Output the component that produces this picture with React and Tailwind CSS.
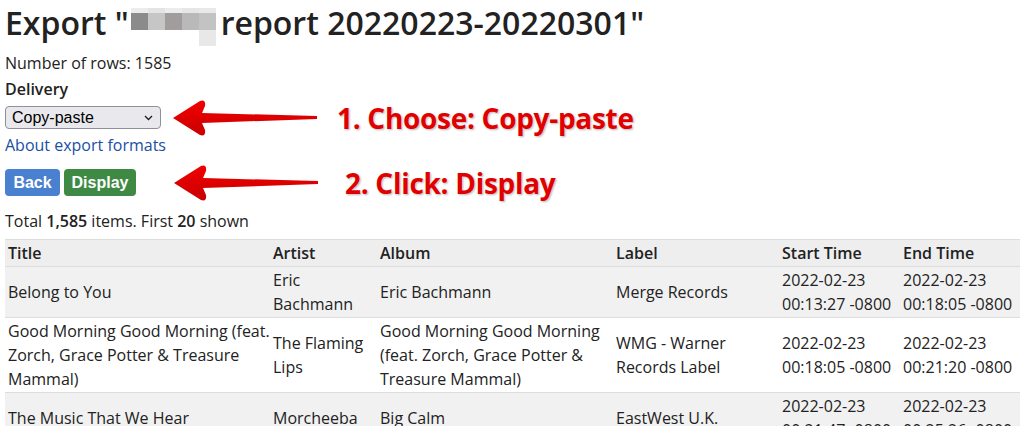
import React from 'react';

const rows = [
  {
    title: 'Belong to You',
    artist: 'Eric Bachmann',
    album: 'Eric Bachmann',
    label: 'Merge Records',
    start: ['2022-02-23', '00:13:27 -0800'],
    end: ['2022-02-23', '00:18:05 -0800'],
  },
  {
    title: 'Good Morning Good Morning (feat. Zorch, Grace Potter & Treasure Mammal)',
    artist: 'The Flaming Lips',
    album: 'Good Morning Good Morning (feat. Zorch, Grace Potter & Treasure Mammal)',
    label: 'WMG - Warner Records Label',
    start: ['2022-02-23', '00:18:05 -0800'],
    end: ['2022-02-23', '00:21:20 -0800'],
  },
  {
    title: 'The Music That We Hear',
    artist: 'Morcheeba',
    album: 'Big Calm',
    label: 'EastWest U.K.',
    start: ['2022-02-23', '00:21:47 -0800'],
    end: ['2022-02-23', '00:25:26 -0800'],
  },
];

// red pointer arrow used on the annotations
const Arrow = () => (
  <svg width="150" height="40" viewBox="0 0 150 40" className="shrink-0">
    <defs>
      <linearGradient id="arrowFill" x1="0" y1="0" x2="0" y2="1">
        <stop offset="0" stopColor="#f20000" />
        <stop offset="1" stopColor="#c80000" />
      </linearGradient>
    </defs>
    <path
      d="M3 20 L30 3 Q36 1 35 8 L32 15 L147 18 L147 21 L32 25 L35 32 Q36 39 30 37 Z"
      fill="url(#arrowFill)"
    />
  </svg>
);

const Note = ({ children }) => (
  <span
    className="text-[28px] leading-[34px] font-bold text-[#e00000] tracking-[-0.3px] whitespace-nowrap"
    style={{ textShadow: '0 0 2px #fff, 1px 1px 2px rgba(0,0,0,0.35)' }}
  >
    {children}
  </span>
);

const Censored = () => (
  <span className="inline-grid grid-cols-5 grid-rows-[5px_17px_16px] w-[85px] mt-[5px] ml-[2px] mr-[5px]">
    <span className="bg-[#ececec]" />
    <span className="bg-[#e4e4e4]" />
    <span className="bg-[#ececec]" />
    <span className="bg-[#e6e6e6]" />
    <span className="bg-[#e9e9e9]" />
    <span className="bg-[#8b8b8b]" />
    <span className="bg-[#c6c6c6]" />
    <span className="bg-[#a29d9d]" />
    <span className="bg-[#b9b9b9]" />
    <span className="bg-[#c3c3c3]" />
    <span />
    <span />
    <span />
    <span />
    <span className="bg-[#e8e8e8]" />
  </span>
);

const App = () => {
  return (
    <div className="w-[1024px] h-[426px] overflow-hidden bg-white px-[5px] text-[#222] font-['Open_Sans',sans-serif]">
      <h1 className="text-[32px] leading-[40px] font-semibold pt-[3px] flex items-start">
        <span>Export "</span>
        <Censored />
        <span>report 20220223-20220301"</span>
      </h1>

      <p className="text-[16px] leading-[20px] mt-[7px]">Number of rows: 1585</p>

      <p className="text-[16px] leading-[20px] font-semibold mt-[6px]">Delivery</p>

      <div className="flex items-center h-[23px] mt-[7px]">
        <div className="w-[156px] h-[23px] shrink-0 rounded-[4px] border border-[#8f8f9d] bg-[#e9e9ed] flex items-center justify-between pl-[6px] pr-[7px] font-['Liberation_Sans',sans-serif] text-[16px] text-black">
          <span>Copy-paste</span>
          <svg width="9" height="6" viewBox="0 0 9 6">
            <path d="M1 1 L4.5 4.5 L8 1" fill="none" stroke="#222" strokeWidth="1.4" />
          </svg>
        </div>
        <div className="ml-[9px] flex items-center">
          <Arrow />
          <span className="ml-[17px]">
            <Note>1. Choose: Copy-paste</Note>
          </span>
        </div>
      </div>

      <a className="block text-[16px] leading-[20px] text-[#1a4fa3] mt-[6px]">About export formats</a>

      <div className="flex items-center h-[27px] mt-[14px]">
        <button className="h-[27px] w-[55px] shrink-0 rounded-[4px] bg-[#4a80d0] text-white font-bold text-[16px] font-['Liberation_Sans',sans-serif]">
          Back
        </button>
        <button className="h-[27px] w-[72px] shrink-0 ml-[4px] rounded-[4px] bg-[#3e8a44] text-white font-bold text-[16px] font-['Liberation_Sans',sans-serif]">
          Display
        </button>
        <div className="ml-[35px] flex items-center">
          <Arrow />
          <span className="ml-[24px]">
            <Note>2. Click: Display</Note>
          </span>
        </div>
      </div>

      <p className="text-[16px] leading-[20px] mt-[15px]">
        Total <b className="font-semibold">1,585</b> items. First <b className="font-semibold">20</b> shown
      </p>

      <table className="mt-[8px] w-[1015px] border-collapse text-[16px] leading-[24px] table-fixed">
        <colgroup>
          <col className="w-[265px]" />
          <col className="w-[107px]" />
          <col className="w-[236px]" />
          <col className="w-[166px]" />
          <col className="w-[121px]" />
          <col className="w-[120px]" />
        </colgroup>
        <thead>
          <tr className="bg-[#eeeeee] border-t border-[#dddddd]">
            <th className="text-left font-semibold pl-[3px] pr-0 py-[1px]">Title</th>
            <th className="text-left font-semibold px-[3px] py-[1px]">Artist</th>
            <th className="text-left font-semibold px-[3px] py-[1px]">Album</th>
            <th className="text-left font-semibold px-[3px] py-[1px]">Label</th>
            <th className="text-left font-semibold px-[3px] py-[1px]">Start Time</th>
            <th className="text-left font-semibold px-[3px] py-[1px]">End Time</th>
          </tr>
        </thead>
        <tbody>
          {rows.map((r, i) => (
            <tr
              key={i}
              className={`border-t border-[#dddddd] ${i % 2 === 0 ? 'bg-[#f1f1f1]' : 'bg-white'}`}
            >
              <td className="pl-[3px] pr-0 py-[1px] align-middle">{r.title}</td>
              <td className="px-[3px] py-[1px] align-middle">{r.artist}</td>
              <td className="px-[3px] py-[1px] align-middle">{r.album}</td>
              <td className="px-[3px] py-[1px] align-middle">{r.label}</td>
              <td className="px-[3px] py-[1px] align-middle">
                {r.start[0]}
                <br />
                {r.start[1]}
              </td>
              <td className="px-[3px] py-[1px] align-middle">
                {r.end[0]}
                <br />
                {r.end[1]}
              </td>
            </tr>
          ))}
        </tbody>
      </table>
    </div>
  );
};

export default App;
